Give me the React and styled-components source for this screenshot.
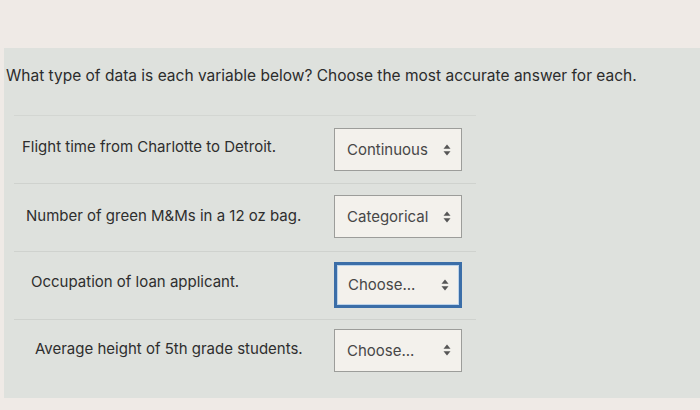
import React from 'react';
import styled, { createGlobalStyle } from 'styled-components';

const Global = createGlobalStyle`
  html, body { margin: 0; padding: 0; }
  body {
    width: 700px;
    height: 410px;
    overflow: hidden;
    background: #efeae6;
    font-family: Inter, "Liberation Sans", Arial, sans-serif;
  }
`;

const Page = styled.div`
  display: flex;
  flex-direction: column;
  height: 410px;
  padding-top: 48px;
  box-sizing: border-box;
`;

const Panel = styled.div`
  margin-left: 4px;
  height: 350px;
  background: #dee1dd;
  padding: 18px 0 0 2px;
  box-sizing: border-box;
`;

const Question = styled.p`
  margin: 0 0 30px;
  font-size: 15.5px;
  color: #2c2c2c;
`;

const Table = styled.div`
  width: 462px;
  margin-left: 8px;
  border-top: 1px solid #d3d6d2;
`;

const Row = styled.div`
  display: grid;
  grid-template-columns: 1fr 128px;
  align-items: center;
  height: 68px;
  padding-left: ${p => p.$indent}px;
  padding-right: 14px;
  border-bottom: ${p => (p.$last ? 'none' : '1px solid #cfd2ce')};
  box-sizing: border-box;
`;

const Label = styled.span`
  font-size: 15px;
  color: #2e2e2e;
  margin-top: ${p => p.$shift}px;
`;

const Select = styled.div`
  display: flex;
  align-items: center;
  justify-content: space-between;
  height: ${p => (p.$focus ? 46 : 43)}px;
  margin-top: ${p => p.$shift}px;
  padding: 0 10px 0 ${p => (p.$focus ? 11 : 12)}px;
  box-sizing: border-box;
  background: #f3f1ec;
  border: ${p => (p.$focus ? '3px solid #3b6ea8' : '1px solid #9c9d9a')};
  box-shadow: ${p => (p.$focus ? 'inset 0 0 0 1px #bcd3ea' : 'none')};
  font-size: 15px;
  color: #474747;
`;

const Arrows = () => (
  <svg width="8" height="12" viewBox="0 0 8 12">
    <path d="M4 0.5 L7.5 4.8 H0.5 Z" fill="#555" />
    <path d="M4 11.5 L7.5 7.2 H0.5 Z" fill="#555" />
  </svg>
);

const rows = [
  { text: 'Flight time from Charlotte to Detroit.', value: 'Continuous', indent: 8, shift: -6, boxShift: 0 },
  { text: 'Number of green M&Ms in a 12 oz bag.', value: 'Categorical', indent: 12, shift: -5, boxShift: -2 },
  { text: 'Occupation of loan applicant.', value: 'Choose...', indent: 17, shift: -8, boxShift: -2, focus: true },
  { text: 'Average height of 5th grade students.', value: 'Choose...', indent: 21, shift: -12, boxShift: -8 },
];

export default function App() {
  return (
    <>
      <Global />
      <Page>
        <Panel>
          <Question>What type of data is each variable below? Choose the most accurate answer for each.</Question>
          <Table>
            {rows.map((r, i) => (
              <Row key={i} $indent={r.indent} $last={i === rows.length - 1}>
                <Label $shift={r.shift}>{r.text}</Label>
                <Select $focus={r.focus} $shift={r.boxShift}>
                  <span>{r.value}</span>
                  <Arrows />
                </Select>
              </Row>
            ))}
          </Table>
        </Panel>
      </Page>
    </>
  );
}
